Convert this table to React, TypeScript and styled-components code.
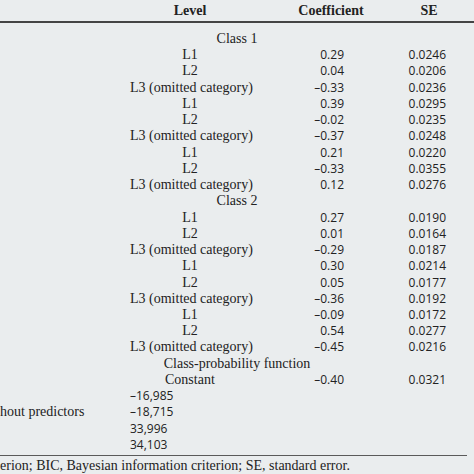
import * as React from 'react';
import styled, {createGlobalStyle} from 'styled-components';

const GlobalStyle = createGlobalStyle`
    html, body {
        margin: 0;
        padding: 0;
        background: #eaedee;
        overflow: hidden;
    }
`;

const serif = `'Liberation Serif', 'DejaVu Serif', serif`;
const sans = `'Open Sans', 'Liberation Sans', sans-serif`;

const Page = styled.div`
    width: 474px;
    height: 474px;
    display: flex;
    flex-direction: column;
    color: #222;
    font-family: ${serif};
`;

const Header = styled.div`
    display: flex;
    flex-direction: row;
    height: 21px;
    align-items: center;
    border-bottom: 2px solid #444;
    font-weight: bold;
    font-size: 14px;
`;

const HeaderCell = styled.div<{width: number; offset: number}>`
    width: ${(p) => p.width}px;
    margin-left: ${(p) => p.offset}px;
    text-align: center;
    padding-top: 1px;
`;

const Body = styled.div`
    display: grid;
    grid-template-columns: 130px 120px 94px 102px 1fr;
    grid-auto-rows: 16.24px;
    padding-top: 8px;
    flex: 1;
    align-content: start;
`;

const Text = styled.div<{align?: string; indent?: number}>`
    font-family: ${serif};
    font-size: 14px;
    line-height: 16px;
    text-align: ${(p) => p.align || 'center'};
    padding-left: ${(p) => p.indent || 0}px;
    white-space: nowrap;
`;

const Span = styled(Text)`
    grid-column: 2 / 4;
`;

const Num = styled.div<{col: number; align?: string}>`
    grid-column: ${(p) => p.col};
    font-family: ${sans};
    font-size: 12px;
    line-height: 16px;
    text-align: ${(p) => p.align || 'right'};
    white-space: nowrap;
`;

const Footer = styled.div`
    border-top: 1.5px solid #5a5a5a;
    width: 467px;
    height: 16px;
    padding-top: 2px;
    font-size: 14px;
    line-height: 15px;
    white-space: nowrap;
`;

type Row = [string, string, string];

const blocks: Row[][] = [
    [
        ['L1', '0.29', '0.0246'],
        ['L2', '0.04', '0.0206'],
        ['L3 (omitted category)', '\u20130.33', '0.0236'],
        ['L1', '0.39', '0.0295'],
        ['L2', '\u20130.02', '0.0235'],
        ['L3 (omitted category)', '\u20130.37', '0.0248'],
        ['L1', '0.21', '0.0220'],
        ['L2', '\u20130.33', '0.0355'],
        ['L3 (omitted category)', '0.12', '0.0276'],
    ],
    [
        ['L1', '0.27', '0.0190'],
        ['L2', '0.01', '0.0164'],
        ['L3 (omitted category)', '\u20130.29', '0.0187'],
        ['L1', '0.30', '0.0214'],
        ['L2', '0.05', '0.0177'],
        ['L3 (omitted category)', '\u20130.36', '0.0192'],
        ['L1', '\u20130.09', '0.0172'],
        ['L2', '0.54', '0.0277'],
        ['L3 (omitted category)', '\u20130.45', '0.0216'],
    ],
];

const fits: [string, string][] = [
    ['', '\u201316,985'],
    ['hout predictors', '\u201318,715'],
    ['', '33,996'],
    ['', '34,103'],
];

const LevelRows = ({rows}: {rows: Row[]}) => (
    <>
        {rows.map(([level, coef, se], i) => (
            <React.Fragment key={i}>
                <Text style={{gridColumn: 2}}>{level}</Text>
                <Num col={3}>{coef}</Num>
                <Num col={4}>{se}</Num>
            </React.Fragment>
        ))}
    </>
);

const App: React.FC = () => {
    return (
        <Page>
            <GlobalStyle />
            <Header>
                <HeaderCell width={120} offset={130}>Level</HeaderCell>
                <HeaderCell width={90} offset={36}>Coefficient</HeaderCell>
                <HeaderCell width={70} offset={18}>SE</HeaderCell>
            </Header>
            <Body>
                <Span>Class 1</Span>
                <LevelRows rows={blocks[0]} />
                <Span>Class 2</Span>
                <LevelRows rows={blocks[1]} />
                <Span>Class-probability function</Span>
                <Text align="left" indent={35} style={{gridColumn: 2}}>Constant</Text>
                <Num col={3}>{'\u20130.40'}</Num>
                <Num col={4}>0.0321</Num>
                {fits.map(([label, value], i) => (
                    <React.Fragment key={i}>
                        <Text align="left" style={{gridColumn: 1}}>{label}</Text>
                        <Num col={2} align="left">{value}</Num>
                    </React.Fragment>
                ))}
            </Body>
            <Footer>erion; BIC, Bayesian information criterion; SE, standard error.</Footer>
        </Page>
    );
};

export default App;
